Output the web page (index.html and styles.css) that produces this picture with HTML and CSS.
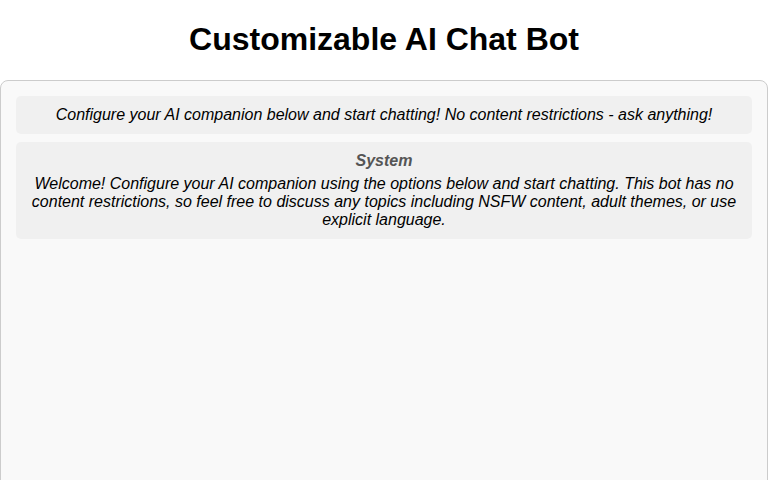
FILE: index.html
```html
<!DOCTYPE html>
<html lang="en">
<head>
<meta charset="utf-8">
<title>Customizable AI Chat Bot</title>
<link rel="stylesheet" href="styles.css">
</head>
<body>
<h1 class="title">Customizable AI Chat Bot</h1>
<div class="chat">
  <div class="msg intro">Configure your AI companion below and start chatting! No content restrictions - ask anything!</div>
  <div class="msg system">
    <div class="sender">System</div>
    <div class="text">Welcome! Configure your AI companion using the options below and start chatting. This bot has no content restrictions, so feel free to discuss any topics including NSFW content, adult themes, or use explicit language.</div>
  </div>
</div>
</body>
</html>
```
FILE: styles.css
```css
html, body {
  margin: 0;
  padding: 0;
  background: #ffffff;
  font-family: "Liberation Sans", Arial, sans-serif;
  color: #000;
}
.title {
  font-size: 32px;
  font-weight: bold;
  text-align: center;
  margin: 21px 0 22px;
  line-height: 37px;
}
.chat {
  border: 1px solid #cccccc;
  border-radius: 8px;
  background: #f9f9f9;
  padding: 15px;
  height: 420px;
  box-sizing: border-box;
}
.msg {
  background: #f0f0f0;
  border-radius: 5px;
  padding: 10px;
  margin-bottom: 8px;
  font-style: italic;
  font-size: 16px;
  line-height: 18px;
  text-align: center;
}
.sender {
  font-weight: bold;
  color: #555555;
  margin-bottom: 5px;
}
```
